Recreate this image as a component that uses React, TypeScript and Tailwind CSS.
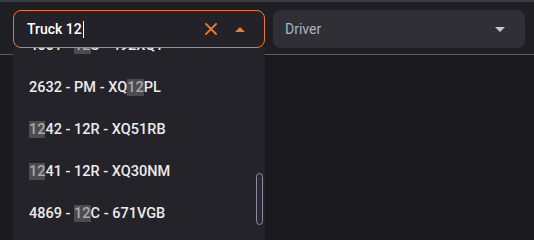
import React from 'react';

const items = [
  { parts: ['4661 - ', '12', 'S - 492XQY'] },
  { parts: ['2632 - PM - XQ', '12', 'PL'] },
  { parts: ['', '12', '42 - 12R - XQ51RB'] },
  { parts: ['', '12', '41 - 12R - XQ30NM'] },
  { parts: ['4869 - ', '12', 'C - 671VGB'] },
  { parts: ['', '12', '07 - 12R - XQ88LT'] },
];

function Caret({ up, color }: { up?: boolean; color: string }) {
  return (
    <svg width="10" height="5" viewBox="0 0 10 5" fill={color}>
      {up ? <path d="M0 5 L5 0 L10 5 Z" /> : <path d="M0 0 L5 5 L10 0 Z" />}
    </svg>
  );
}

export default function App() {
  return (
    <div
      className="relative w-[534px] h-[240px] overflow-hidden bg-[#1e1e23] text-[14px]"
      style={{ fontFamily: 'Roboto, "Liberation Sans", sans-serif' }}
    >
      <div className="h-[2px] bg-[#3a3a46]" />

      {/* Filter row */}
      <div className="relative z-10 flex gap-[8px] pl-[13px] pt-[8px]">
        <div className="flex h-[38px] w-[252px] shrink-0 items-center rounded-[8px] border border-[#ec7a2c] bg-[#232228] pl-[13px] pr-[19px]">
          <span className="font-medium text-white">Truck 12</span>
          <span className="ml-px h-[17px] w-px bg-white" />
          <div className="flex-1" />
          <svg width="12" height="12" viewBox="0 0 12 12" className="mr-[18px]">
            <path d="M1 1 L11 11 M11 1 L1 11" stroke="#f07a2a" strokeWidth="1.8" strokeLinecap="square" />
          </svg>
          <Caret up color="#f07a2a" />
        </div>
        <div className="flex h-[38px] w-[252px] shrink-0 items-center rounded-[8px] bg-[#2f2f35] pl-[12px] pr-[20px]">
          <span className="flex-1 text-[#acb3c6]">Driver</span>
          <Caret color="#c5c8d4" />
        </div>
      </div>

      <div className="mt-[6px] h-px bg-[#5c5c60]" />
      <div className="h-full bg-[#1a1a1e]" />

      {/* Options list */}
      <div className="absolute left-[13px] top-[44px] bottom-0 w-[252px] overflow-hidden rounded-t-[8px] bg-[#242329]">
        <div className="mt-[-19px]">
          {items.map((it, i) => (
            <div
              key={i}
              className="h-[42px] whitespace-pre pl-[16px] text-[14.5px] leading-[42px] font-medium text-[#ebebeb]"
            >
              {it.parts[0]}
              <span className="inline-block bg-[#4c4c4e] leading-[17px] text-[#a8a8a8]">{it.parts[1]}</span>
              {it.parts[2]}
            </div>
          ))}
        </div>
        <div className="absolute right-[2px] top-[129px] h-[52px] w-[7px] rounded-full border border-[#8d8c9a] bg-[#2a2939]" />
      </div>
    </div>
  );
}
